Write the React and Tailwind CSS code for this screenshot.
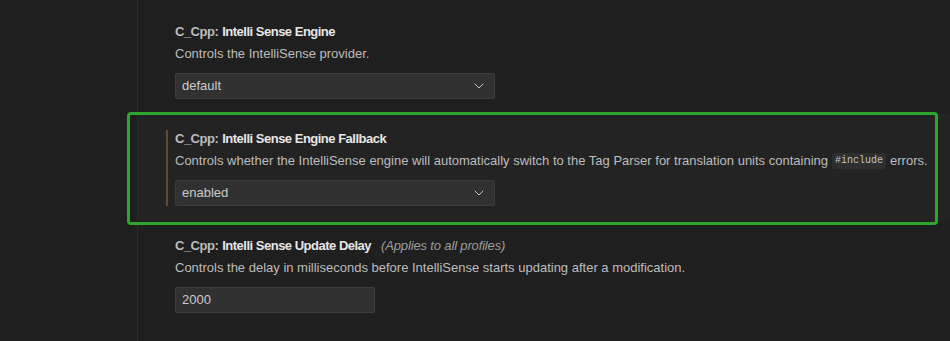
import { ChevronDown } from 'lucide-react';

function Title({ prefix, name, note }) {
    return (
        <div className="h-[18px] leading-[18px] text-[13px] flex items-center mt-[1px]">
            <span className="font-semibold text-[#bdbdbd] tracking-[-0.5px]">{prefix}: </span>
            <span className="font-bold text-[#e7e7e7] ml-1 tracking-[-0.5px]">{name}</span>
            {note && <span className="italic tracking-[-0.15px] text-[#9d9d9d] ml-[10px]">{note}</span>}
        </div>
    );
}

function Select({ value }) {
    return (
        <div className="mt-[10px] w-[320px] h-[26px] flex items-center justify-between bg-[#313131] border border-[#3c3c3c] rounded-[2px] pl-[6px] pr-[7px] text-[13px] text-[#cccccc]">
            <span>{value}</span>
            <ChevronDown size={16} strokeWidth={1.5} className="text-[#c5c5c5]" />
        </div>
    );
}

function Row({ focused, children }) {
    return (
        <div className={focused ? 'h-[107px] pt-[15px] pl-[28px] bg-[#232323]' : 'h-[107px] pt-[15px] pl-[28px]'}>
            <div className={focused ? 'border-l-2 border-[#5e4d28] pl-[7px]' : 'border-l-2 border-transparent pl-[7px]'}>
                {children}
            </div>
        </div>
    );
}

export default function App() {
    return (
        <div
            className="relative w-[950px] h-[341px] overflow-hidden bg-[#1f1f1f] flex"
            style={{ fontFamily: '"Liberation Sans", Arial, sans-serif' }}
        >
            {/* Table of contents column */}
            <div className="w-[138px] shrink-0 border-r border-[#2b2b2b]" />

            {/* Settings list */}
            <div className="flex-1 pt-[7px]">
                <Row>
                    <Title prefix="C_Cpp" name="Intelli Sense Engine" />
                    <div className="mt-[4px] h-[18px] leading-[18px] text-[13px] text-[#bdbdbd]">Controls the IntelliSense provider.</div>
                    <Select value="default" />
                </Row>

                <Row focused>
                    <Title prefix="C_Cpp" name="Intelli Sense Engine Fallback" />
                    <div className="mt-[4px] h-[18px] leading-[18px] text-[13px] text-[#bdbdbd] flex items-center whitespace-nowrap">
                        Controls whether the IntelliSense engine will automatically switch to the Tag Parser for translation units containing
                        <code className="mx-[4px] px-[3px] py-[1px] rounded-[3px] bg-[#2f2f2f] text-[#c4c4c4] text-[10px] leading-[14px] font-['Liberation_Mono',monospace]">#include</code>
                        errors.
                    </div>
                    <Select value="enabled" />
                </Row>

                <Row>
                    <Title prefix="C_Cpp" name="Intelli Sense Update Delay" note="(Applies to all profiles)" />
                    <div className="mt-[4px] h-[18px] leading-[18px] text-[13px] text-[#bdbdbd]">Controls the delay in milliseconds before IntelliSense starts updating after a modification.</div>
                    <div className="mt-[10px] w-[200px] h-[26px] flex items-center bg-[#313131] border border-[#3c3c3c] rounded-[2px] pl-[6px] text-[13px] text-[#cccccc]">
                        2000
                    </div>
                </Row>
            </div>

            {/* Highlight outline over the focused setting */}
            <div className="absolute left-[127px] top-[112px] w-[811px] h-[113px] border-[3px] border-[#2ea52e] rounded-[4px] pointer-events-none" />
        </div>
    );
}
